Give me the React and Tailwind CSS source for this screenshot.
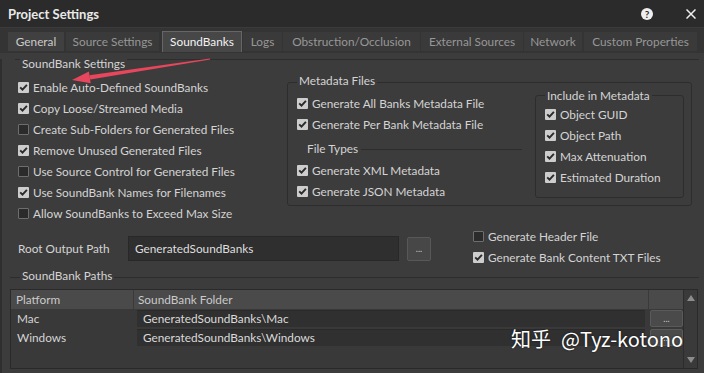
import React from "react";

function Check({ on }) {
  if (on)
    return (
      <span className="w-[11px] h-[11px] shrink-0 bg-[#cdcdcd] rounded-[1px] flex items-center justify-center">
        <svg width="9" height="9" viewBox="0 0 9 9">
          <path d="M1.2 4.3 L3.5 6.7 L7.9 1.8" fill="none" stroke="#2a2a2a" strokeWidth="1.9" />
        </svg>
      </span>
    );
  return <span className="w-[11px] h-[11px] shrink-0 bg-[#2b2b2b] border border-[#6e6e6e] rounded-[1px]" />;
}

function Row({ on, children }) {
  return (
    <div className="flex items-center h-[21px] gap-[4px] whitespace-nowrap">
      <Check on={on} />
      <span>{children}</span>
    </div>
  );
}

const tabs = [
  { t: "General", c: "w-[56px] ml-[8px] h-[19px] bg-[#404040] text-[#cccccc]" },
  { t: "Source Settings", c: "w-[93px] ml-[2px] h-[19px] bg-[#3a3a3a] text-[#979797]" },
  { t: "SoundBanks", c: "w-[80px] ml-[3px] h-[21px] -mt-[1px] bg-[#474747] border border-b-0 border-[#666666] text-[#f2f2f2]" },
  { t: "Logs", c: "w-[39px] ml-[1px] h-[19px] bg-[#3a3a3a] text-[#979797]" },
  { t: "Obstruction/Occlusion", c: "w-[137px] ml-[1px] h-[19px] bg-[#3a3a3a] text-[#979797]" },
  { t: "External Sources", c: "w-[102px] ml-[1px] h-[19px] bg-[#3a3a3a] text-[#979797]" },
  { t: "Network", c: "w-[58px] ml-[1px] h-[19px] bg-[#3a3a3a] text-[#979797]" },
  { t: "Custom Properties", c: "w-[113px] ml-[2px] h-[19px] bg-[#3a3a3a] text-[#979797]" },
];

function Legend({ children, cls }) {
  return <div className={"px-[2px] w-fit bg-[#3c3c3c] h-[14px] whitespace-nowrap " + cls}>{children}</div>;
}

export default function App() {
  return (
    <div className="w-[704px] h-[373px] overflow-hidden relative bg-[#3c3c3c] text-[11.8px] leading-[14px] text-[#d4d4d4] font-['Lato',sans-serif]">
      {/* Title bar */}
      <div className="h-[27px] bg-[#2b2b2b] flex items-center pl-[8px] pr-[8px]">
        <span className="font-bold text-[13px] text-[#e9e9e9]">Project Settings</span>
        <div className="ml-auto flex items-center gap-[33px]">
          <span className="w-[12px] h-[12px] rounded-full bg-[#eeeeee] flex items-center justify-center text-[#2b2b2b] text-[10px] font-bold leading-none">?</span>
          <svg width="10" height="10" viewBox="0 0 10 10">
            <path d="M0.5 0.5 L9.5 9.5 M9.5 0.5 L0.5 9.5" stroke="#eeeeee" strokeWidth="1.5" />
          </svg>
        </div>
      </div>
      {/* Tabs */}
      <div className="h-[26px] bg-[#343434] border-t border-[#3b3b3b] flex items-start pt-[4px]">
        {tabs.map((tb) => (
          <div key={tb.t} className={"flex items-center justify-center whitespace-nowrap " + tb.c}>
            {tb.t}
          </div>
        ))}
      </div>
      {/* Pane */}
      <div className="h-[320px] border-l-[2px] border-[#2f2f2f]">
        {/* SoundBank Settings */}
        <div className="ml-[13px] mt-[6px] w-[684px] border-t border-[#2d2d2d]">
          <Legend cls="ml-[5px] -mt-[3px]">SoundBank Settings</Legend>
          <div className="flex">
            <div className="w-[272px] pl-[3px] pt-[6px]">
              <Row on>Enable Auto-Defined SoundBanks</Row>
              <Row on>Copy Loose/Streamed Media</Row>
              <Row>Create Sub-Folders for Generated Files</Row>
              <Row on>Remove Unused Generated Files</Row>
              <Row>Use Source Control for Generated Files</Row>
              <Row on>Use SoundBank Names for Filenames</Row>
              <Row>Allow SoundBanks to Exceed Max Size</Row>
            </div>
            <div className="mt-[11px] w-[405px] h-[124px] border border-[#2d2d2d] rounded-[3px]">
              <Legend cls="ml-[9px] -mt-[9px]">Metadata Files</Legend>
              <div className="flex">
                <div className="w-[247px] pl-[9px] pt-[5px]">
                  <Row on>Generate All Banks Metadata File</Row>
                  <Row on>Generate Per Bank Metadata File</Row>
                  <div className="h-[25px] flex items-end pb-[4px]">
                    <span className="ml-[10px] whitespace-nowrap">File Types</span>
                    <div className="flex-1 h-px bg-[#2d2d2d] ml-[3px] mr-[13px] mb-[6px]" />
                  </div>
                  <Row on>Generate XML Metadata</Row>
                  <Row on>Generate JSON Metadata</Row>
                </div>
                <div className="mt-[7px] w-[149px] h-[103px] border border-[#2d2d2d] rounded-[3px]">
                  <Legend cls="ml-[9px] -mt-[7px]">Include in Metadata</Legend>
                  <div className="pl-[9px] pt-[1px]">
                    <Row on>Object GUID</Row>
                    <Row on>Object Path</Row>
                    <Row on>Max Attenuation</Row>
                    <Row on>Estimated Duration</Row>
                  </div>
                </div>
              </div>
            </div>
          </div>
          <div className="flex mt-[2px] h-[42px]">
            <div className="flex pt-[10px] pl-[3px]">
              <div className="w-[110px] h-[25px] flex items-center whitespace-nowrap">Root Output Path</div>
              <div className="w-[271px] h-[25px] bg-[#2f2f2f] border border-[#282828] flex items-center pl-[6px] text-[#dedede]">GeneratedSoundBanks</div>
              <div className="ml-[8px] mt-[1px] w-[24px] h-[24px] bg-[#474747] border border-[#585858] rounded-[2px] flex items-center justify-center text-[#c8c8c8] text-[9px]">...</div>
            </div>
            <div className="ml-[42px]">
              <Row>Generate Header File</Row>
              <Row on>Generate Bank Content TXT Files</Row>
            </div>
          </div>
        </div>
        {/* SoundBank Paths */}
        <div className="ml-[8px] mt-[9px] w-[689px] border-t border-[#2d2d2d]">
          <Legend cls="ml-[10px] -mt-[9px]">SoundBank Paths</Legend>
          <div className="mt-[6px] w-[688px] h-[80px] border border-[#2a2a2a] flex bg-[#393939]">
            <div className="flex-1">
              <div className="h-[19px] bg-[#4a4a4a] flex text-[#c9c9c9]">
                <div className="w-[123px] border-r border-[#3a3a3a] pl-[5px] flex items-center">Platform</div>
                <div className="w-[515px] border-r border-[#3a3a3a] pl-[4px] flex items-center">SoundBank Folder</div>
                <div className="flex-1" />
              </div>
              {[
                ["Mac", "GeneratedSoundBanks\\Mac"],
                ["Windows", "GeneratedSoundBanks\\Windows"],
              ].map(([p, f]) => (
                <div key={p} className="h-[19px] flex">
                  <div className="w-[123px] pl-[6px] flex items-center">{p}</div>
                  <div className="w-[515px] pl-[3px] pr-[4px] py-[1px]">
                    <div className="h-full bg-[#303030] border-t border-[#2a2a2a] pl-[6px] flex items-center text-[#dadada]">{f}</div>
                  </div>
                  <div className="pl-[1px] py-[1px]">
                    <div className="w-[33px] h-[17px] bg-[#4a4a4a] border border-[#5a5a5a] rounded-[2px] flex items-center justify-center text-[#c8c8c8] text-[9px]">...</div>
                  </div>
                </div>
              ))}
            </div>
            <div className="w-[14px] border-l border-[#2c2c2c] bg-[#3a3a3a] flex flex-col items-center justify-between py-[5px]">
              <svg width="8" height="6" viewBox="0 0 8 6"><path d="M4 0 L8 6 L0 6 Z" fill="#8c8c8c" /></svg>
              <svg width="8" height="6" viewBox="0 0 8 6"><path d="M0 0 L8 0 L4 6 Z" fill="#8c8c8c" /></svg>
            </div>
          </div>
        </div>
      </div>

      {/* Watermark */}
      <div className="absolute left-[511px] top-[326px] flex items-center gap-[10px] text-white text-[20px] leading-[26px] font-['Noto_Sans_CJK_SC',sans-serif] [text-shadow:0_0_2px_rgba(0,0,0,0.7)]">
        <span>知乎</span>
        <span>@Tyz-kotono</span>
      </div>

      {/* Red arrow annotation */}
      <svg className="absolute left-0 top-0 pointer-events-none" width="704" height="373" viewBox="0 0 704 373">
        <polygon points="72,80 88.9,71.4 90.7,83.2" fill="#e8465c" />
        <polygon points="89.3,75.2 210,58.4 210.2,59.6 90.3,79.4" fill="#e8465c" />
      </svg>
    </div>
  );
}
